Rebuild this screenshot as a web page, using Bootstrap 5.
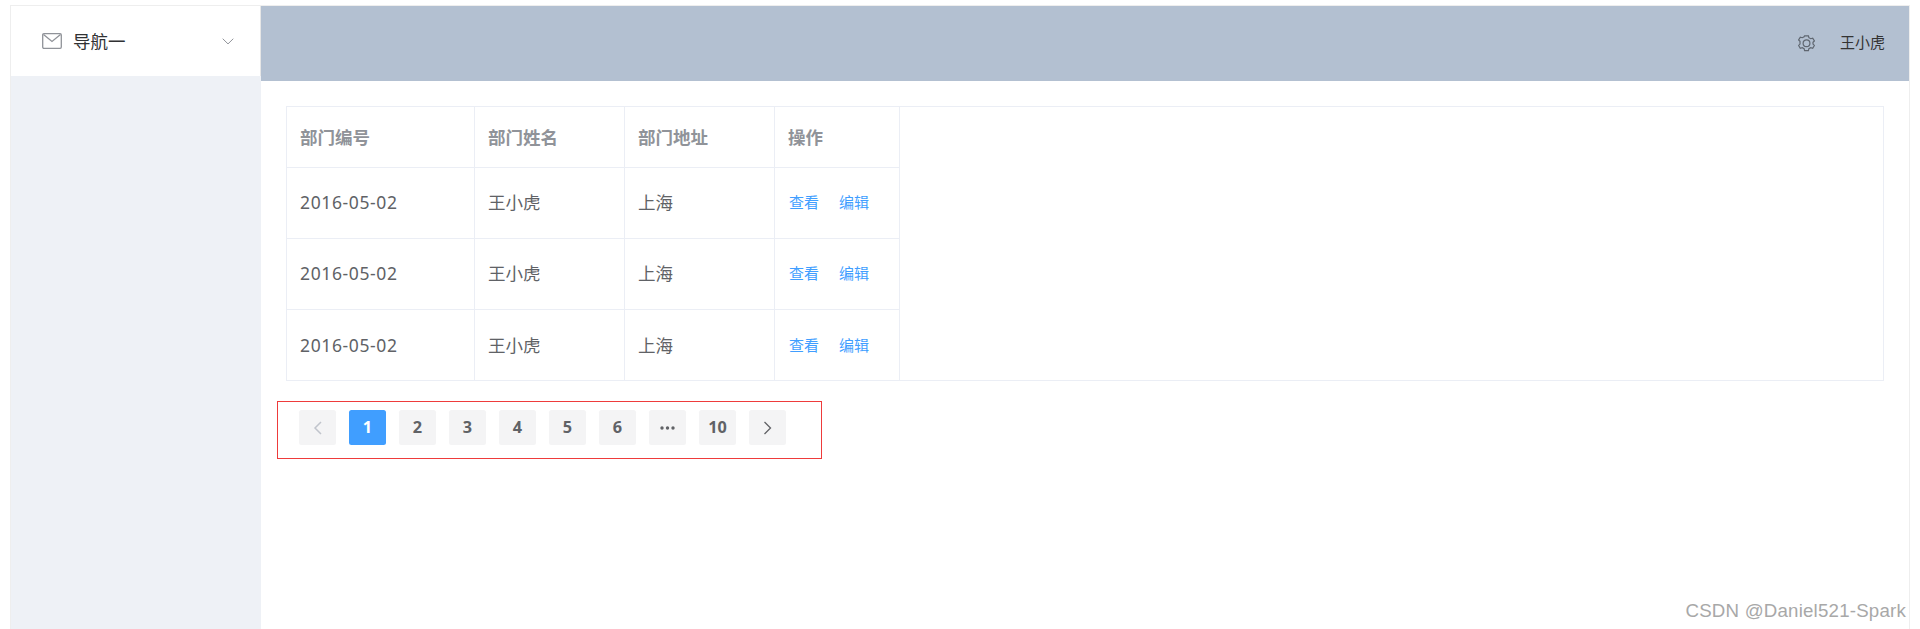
<!DOCTYPE html>
<html lang="zh">
<head>
<meta charset="utf-8">
<title>部门列表</title>
<link rel="stylesheet" href="https://cdn.jsdelivr.net/npm/bootstrap@5.3.0/dist/css/bootstrap.min.css">
<style>
html,body{height:100%;background:#fff;overflow:hidden}
body{font-family:"Noto Sans","Noto Sans CJK SC",sans-serif;color:#606266}
.shell{margin:5px 10px 0;height:624px;border:1px solid #eee;border-bottom:0;position:relative}
.side{width:250px;background:#eef1f6;flex:none}
.side-item{height:70px;background:#fff;border-right:1px solid #e6e6e6;padding:0 26px 0 31px;color:#303133;font-size:17.5px}
.side-item svg.mail{margin-right:11px}
.topbar{height:75px;background:#b3c0d1;padding:0 24px 0 0;color:#333;font-size:15px}
.topbar svg{margin-right:25px}
.topbar span{margin-top:-2px}
.content{padding:25px 25px 0}
.table-box{border:1px solid #ebeef5;background:#fff}
.dept-table{width:613px;table-layout:fixed;border-collapse:separate;border-spacing:0;font-size:17.5px;margin:0}
.dept-table th,.dept-table td{padding:0 13px;border-right:1px solid #ebeef5;border-bottom:1px solid #ebeef5;vertical-align:middle}
.dept-table th{height:61px;color:#909399;font-weight:700}
.dept-table td{height:71px;color:#606266}
.dept-table tr:last-child td{height:70px;border-bottom:0}
.dept-table td>span{display:block;margin-top:-2px}
.dept-table tr:last-child td>span{margin-top:0}
.date-text{letter-spacing:.62px}
.dept-table td a{position:relative;top:-1px;font-size:15px;color:#409eff;text-decoration:none;margin:0 20px 0 1px}
.dept-table td a+a{margin:0}
.pager-frame{margin:20px 0 0 -9px;width:545px;height:58px;border:1.4px solid #ee3b3b;padding:8px 0 0 21px}
.pager{gap:13px;margin:0}
.pager .page-item .page-link,.pager .page-item:not(:first-child) .page-link{width:37px;height:35px;padding:0;margin:0;border:0;border-radius:2.5px;background:#f4f4f5;color:#606266;font-size:16.25px;font-weight:700;display:flex;align-items:center;justify-content:center}
.pager .page-item.active .page-link{background:#409eff;color:#fff}
.pager .page-item.disabled .page-link{color:#c0c4cc}
.stamp{position:absolute;right:3px;bottom:8px;font-family:"Liberation Sans",sans-serif;font-size:18.7px;line-height:20px;color:#a8a8a8;letter-spacing:.2px}
</style>
</head>
<body>
<div class="shell d-flex">
  <aside class="side">
    <div class="side-item d-flex align-items-center">
      <svg class="mail" width="20" height="16" viewBox="0 0 20 16" fill="none" stroke="#909399" stroke-width="1.3"><rect x=".7" y=".7" width="18.6" height="14.6" rx="1.2"/><path d="M1.5 1.5 10 8.5l8.5-7"/></svg>
      <span>导航一</span>
      <svg class="ms-auto" width="12" height="7" viewBox="0 0 12 7" fill="none" stroke="#909399" stroke-width="1"><path d="M.7.7 6 5.9 11.3.7"/></svg>
    </div>
  </aside>
  <div class="flex-grow-1">
    <header class="topbar d-flex align-items-center justify-content-end">
      <svg width="17" height="17" viewBox="0 0 17 17" fill="none" stroke="#5f6670" stroke-width="1.2"><path d="M6.6 1.2h3.8l.5 2 1.8 1 2-.6 1.7 3-1.4 1.4v1.9l1.4 1.4-1.7 3-2-.6-1.8 1-.5 2H6.6l-.5-2-1.8-1-2 .6-1.7-3 1.4-1.4V7L.6 5.6l1.7-3 2 .6 1.8-1z" transform="translate(0 -.3) scale(1 .95)"/><circle cx="8.5" cy="8.2" r="3.4"/></svg>
      <span>王小虎</span>
    </header>
    <main class="content">
      <div class="table-box">
        <table class="dept-table">
          <colgroup><col style="width:188px"><col style="width:150px"><col style="width:150px"><col style="width:125px"></colgroup>
          <thead><tr><th>部门编号</th><th>部门姓名</th><th>部门地址</th><th>操作</th></tr></thead>
          <tbody>
            <tr><td><span class="date-text">2016-05-02</span></td><td><span>王小虎</span></td><td><span>上海</span></td><td><span><a href="#">查看</a><a href="#">编辑</a></span></td></tr>
            <tr><td><span class="date-text">2016-05-02</span></td><td><span>王小虎</span></td><td><span>上海</span></td><td><span><a href="#">查看</a><a href="#">编辑</a></span></td></tr>
            <tr><td><span class="date-text">2016-05-02</span></td><td><span>王小虎</span></td><td><span>上海</span></td><td><span><a href="#">查看</a><a href="#">编辑</a></span></td></tr>
          </tbody>
        </table>
      </div>
      <div class="pager-frame">
        <ul class="pagination pager">
          <li class="page-item disabled"><a class="page-link" href="#"><svg width="9" height="14" viewBox="0 0 9 14" fill="none" stroke="#c0c4cc" stroke-width="1.5"><path d="M8 1 2 7l6 6"/></svg></a></li>
          <li class="page-item active"><a class="page-link" href="#">1</a></li>
          <li class="page-item"><a class="page-link" href="#">2</a></li>
          <li class="page-item"><a class="page-link" href="#">3</a></li>
          <li class="page-item"><a class="page-link" href="#">4</a></li>
          <li class="page-item"><a class="page-link" href="#">5</a></li>
          <li class="page-item"><a class="page-link" href="#">6</a></li>
          <li class="page-item"><a class="page-link" href="#"><svg width="15" height="4" viewBox="0 0 15 4" fill="#606266"><circle cx="2" cy="2" r="1.7"/><circle cx="7.5" cy="2" r="1.7"/><circle cx="13" cy="2" r="1.7"/></svg></a></li>
          <li class="page-item"><a class="page-link" href="#">10</a></li>
          <li class="page-item"><a class="page-link" href="#"><svg width="9" height="14" viewBox="0 0 9 14" fill="none" stroke="#606266" stroke-width="1.3"><path d="m1.5 1 6 6-6 6"/></svg></a></li>
        </ul>
      </div>
    </main>
  </div>
  <div class="stamp">CSDN @Daniel521-Spark</div>
</div>
<script src="https://cdn.jsdelivr.net/npm/bootstrap@5.3.0/dist/js/bootstrap.bundle.min.js"></script>
</body>
</html>
